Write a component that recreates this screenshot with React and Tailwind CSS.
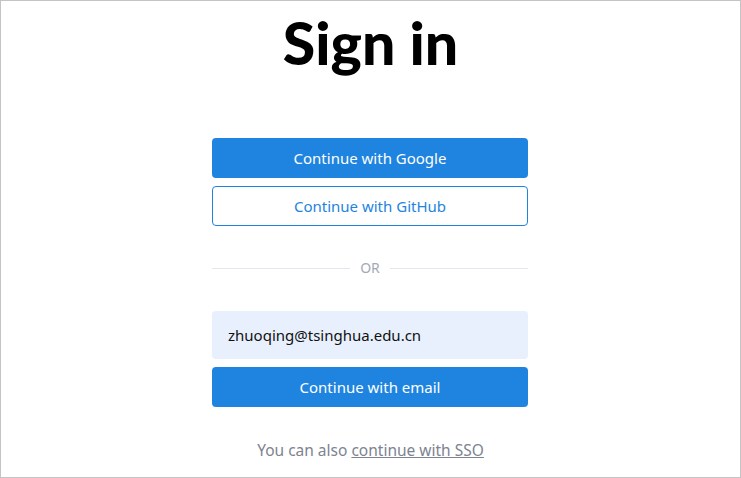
export default function App() {
  return (
    <div className="w-[741px] h-[478px] border border-[#c4c4c4] bg-white flex flex-col items-center" style={{ fontFamily: '"Noto Sans", sans-serif' }}>
      <h1 className="text-[59px] font-black leading-none text-black mt-[12px]" style={{ fontFamily: 'Lato, sans-serif' }}>Sign in</h1>
      <div className="w-[316px] self-start ml-[211px] mt-[66px] flex flex-col gap-2">
        <button className="h-10 rounded bg-[#1e84e0] text-white text-[15px]">Continue with Google</button>
        <button className="h-10 rounded border border-[#1e84e0] bg-white text-[#1e84e0] text-[15px]">Continue with GitHub</button>
      </div>
      <div className="w-[316px] self-start ml-[211px] mt-[32px] flex items-center gap-[10px]">
        <div className="flex-1 h-px bg-[#e3e7ee]"></div>
        <span className="text-[14px] text-[#a3a9b6] leading-5">OR</span>
        <div className="flex-1 h-px bg-[#e3e7ee]"></div>
      </div>
      <div className="w-[316px] self-start ml-[211px] mt-[33px] flex flex-col gap-2">
        <div className="h-12 rounded bg-[#e8f0fe] flex items-center px-4 text-[15px] text-[#111]">zhuoqing@tsinghua.edu.cn</div>
        <button className="h-10 rounded bg-[#1e84e0] text-white text-[15px]">Continue with email</button>
      </div>
      <p className="mt-[32px] text-[15.5px] text-[#7d8391]">
        You can also <span className="underline">continue with SSO</span>
      </p>
    </div>
  );
}
